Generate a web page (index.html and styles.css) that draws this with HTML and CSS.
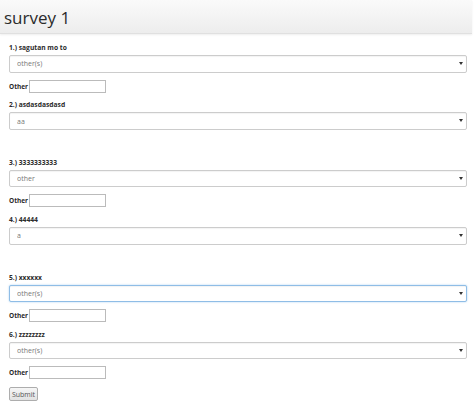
FILE: index.html
```html
<!DOCTYPE html>
<html>
<head>
<meta charset="utf-8">
<title>survey 1</title>
<link rel="stylesheet" href="styles.css">
</head>
<body>
<header class="page-header">
  <h1 class="title">survey 1</h1>
</header>
<form class="survey">
  <div class="question">
    <label class="q-label">1.) sagutan mo to</label>
    <div class="select-wrap"><select class="q-select"><option>other(s)</option></select></div>
    <div class="other-row"><label class="other-label">Other</label><input class="other-input" type="text"></div>
  </div>
  <div class="question">
    <label class="q-label">2.) asdasdasdasd</label>
    <div class="select-wrap"><select class="q-select"><option>aa</option></select></div>
    <div class="other-row is-hidden"><label class="other-label">Other</label><input class="other-input" type="text"></div>
  </div>
  <div class="question">
    <label class="q-label">3.) 3333333333</label>
    <div class="select-wrap"><select class="q-select"><option>other</option></select></div>
    <div class="other-row"><label class="other-label">Other</label><input class="other-input" type="text"></div>
  </div>
  <div class="question">
    <label class="q-label">4.) 44444</label>
    <div class="select-wrap"><select class="q-select"><option>a</option></select></div>
    <div class="other-row is-hidden"><label class="other-label">Other</label><input class="other-input" type="text"></div>
  </div>
  <div class="question">
    <label class="q-label">5.) xxxxxx</label>
    <div class="select-wrap"><select class="q-select is-focused"><option>other(s)</option></select></div>
    <div class="other-row"><label class="other-label">Other</label><input class="other-input" type="text"></div>
  </div>
  <div class="question">
    <label class="q-label">6.) zzzzzzzz</label>
    <div class="select-wrap"><select class="q-select"><option>other(s)</option></select></div>
    <div class="other-row"><label class="other-label">Other</label><input class="other-input" type="text"></div>
  </div>
  <button class="submit-btn" type="button">Submit</button>
</form>
</body>
</html>
```
FILE: styles.css
```css
* { box-sizing: border-box; }
html, body { margin: 0; padding: 0; background: #fff; }
body { font-family: "Open Sans", "Noto Sans", sans-serif; color: #333; }

.page-header {
  height: 34px;
  margin-right: 2px;
  background: linear-gradient(to bottom, #fafafa 0%, #ededed 100%);
  border-bottom: 1px solid #e0e0e0;
  box-shadow: 0 1px 2px rgba(0,0,0,0.07);
  display: flex;
  align-items: center;
  padding-left: 4px;
}
.title {
  margin: 0;
  font-size: 17px;
  font-weight: 400;
  color: #2b2b2b;
  line-height: 1;
  padding-top: 1px;
}

.survey {
  padding: 9px 7px 0 9px;
  display: flex;
  flex-direction: column;
}
.question {
  display: flex;
  flex-direction: column;
  padding-bottom: 7.9px;
}
.q-label {
  font-size: 6.7px;
  font-weight: 700;
  line-height: 10px;
  color: #2b2b2b;
  margin-bottom: 2px;
}
.select-wrap {
  position: relative;
}
.select-wrap::after {
  content: "";
  position: absolute;
  right: 4px;
  top: 7px;
  border-left: 2px solid transparent;
  border-right: 2px solid transparent;
  border-top: 3px solid #333;
}
.q-select {
  -webkit-appearance: none;
  appearance: none;
  display: block;
  width: 100%;
  height: 17.5px;
  padding: 0 7px;
  font-family: inherit;
  font-size: 7px;
  color: #777;
  background: #fff;
  border: 1px solid #ccc;
  border-radius: 2px;
  box-shadow: inset 0 1px 1px rgba(0,0,0,0.05);
  outline: none;
}
.q-select.is-focused {
  border-color: #8fbde6;
  box-shadow: inset 0 1px 1px rgba(0,0,0,0.05), 0 0 2px rgba(102,175,233,0.6);
}
.other-row {
  display: flex;
  align-items: center;
  gap: 1px;
  margin-top: 7px;
  height: 13px;
}
.other-row.is-hidden { visibility: hidden; }
.other-label {
  font-size: 6.5px;
  font-weight: 700;
  color: #2b2b2b;
}
.other-input {
  width: 77px;
  height: 13px;
  border: 1px solid #bbb;
  padding: 0 2px;
  margin: 0;
  background: #fff;
}
.submit-btn {
  align-self: flex-start;
  margin-top: 0;
  width: 29px;
  height: 14px;
  padding: 0;
  font-family: inherit;
  font-size: 7px;
  color: #555;
  background: linear-gradient(to bottom, #f6f6f6, #e2e2e2);
  border: 1px solid #adadad;
  border-radius: 2px;
}
```
